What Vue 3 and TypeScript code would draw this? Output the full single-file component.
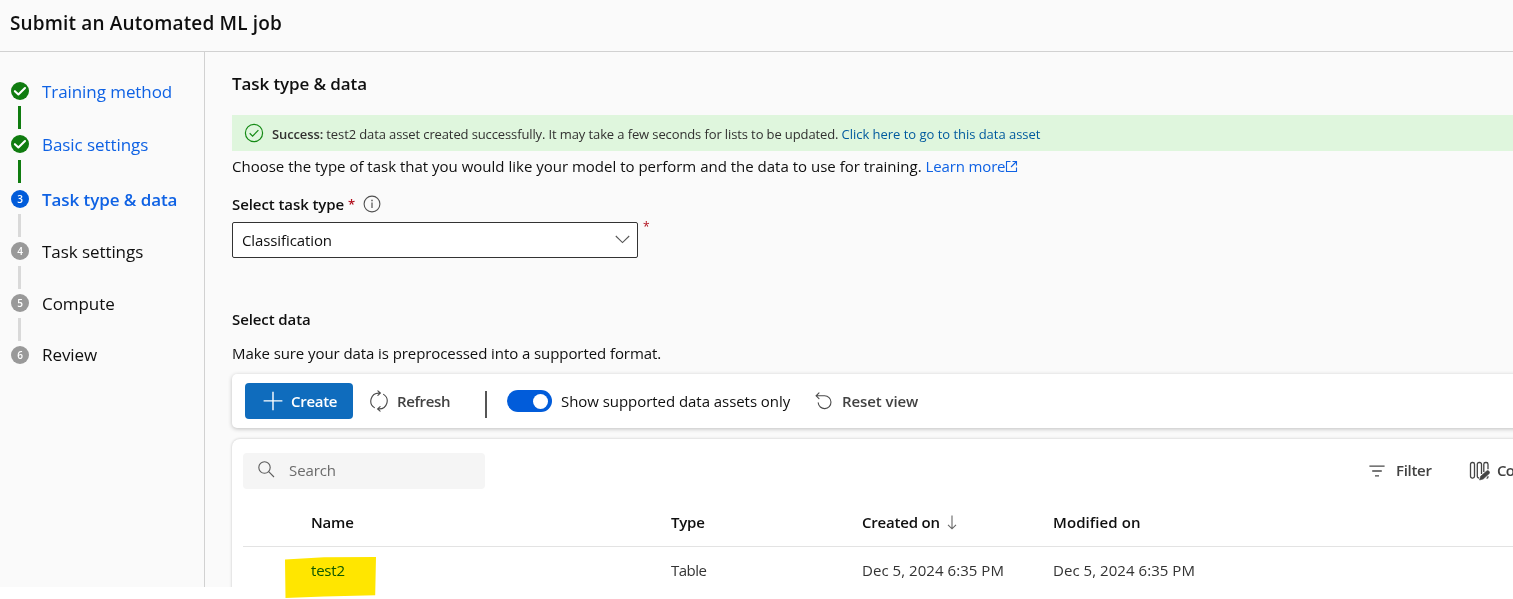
<script setup lang="ts">
type StepState = 'done' | 'current' | 'todo'

interface Step {
  label: string
  state: StepState
  gap: number
}

interface Asset {
  name: string
  type: string
  created: string
  modified: string
}

const steps: Step[] = [
  { label: 'Training method', state: 'done', gap: 35 },
  { label: 'Basic settings', state: 'done', gap: 37 },
  { label: 'Task type & data', state: 'current', gap: 34 },
  { label: 'Task settings', state: 'todo', gap: 34 },
  { label: 'Compute', state: 'todo', gap: 34 },
  { label: 'Review', state: 'todo', gap: 0 },
]

const assets: Asset[] = [
  { name: 'test2', type: 'Table', created: 'Dec 5, 2024 6:35 PM', modified: 'Dec 5, 2024 6:35 PM' },
]
</script>

<template>
  <div class="page">
    <div class="app">
      <header class="top"><h1>Submit an Automated ML job</h1></header>
      <div class="body">
        <nav class="steps">
          <template v-for="(step, i) in steps" :key="step.label">
            <div class="step" :class="step.state">
              <span class="dot">
                <svg v-if="step.state === 'done'" width="18" height="18" viewBox="0 0 18 18">
                  <path d="M3.9 9.2 7.4 12.5 14 6" fill="none" stroke="#fff" stroke-width="2.1" stroke-linecap="round" stroke-linejoin="round" />
                </svg>
                <template v-else>{{ i + 1 }}</template>
              </span>
              <span class="step-label">{{ step.label }}</span>
            </div>
            <div v-if="step.gap" class="link" :class="step.state" :style="{ height: step.gap + 'px' }"><i></i></div>
          </template>
        </nav>

        <main class="main">
          <h2>Task type &amp; data</h2>
          <div class="banner">
            <svg width="20" height="20" viewBox="0 0 20 20" fill="none" stroke="#158a15">
              <circle cx="10" cy="10" r="8.6" stroke-width="1.2" />
              <path d="M5.7 10.3 8.6 13.1 14.4 7.1" stroke-width="1.2" />
            </svg>
            <span class="banner-text"><b>Success:</b> test2 data asset created successfully. It may take a few seconds for lists to be updated. <a>Click here to go to this data asset</a></span>
          </div>
          <p class="desc">
            <span>Choose the type of task that you would like your model to perform and the data to use for training.</span>
            <a>Learn more</a>
            <svg width="13" height="13" viewBox="0 0 13 13" fill="none" stroke="#0f62e4" stroke-width="1.1">
              <path d="M5.500 1.500H1.500v10h10V7.500M7.500 1.500h4v4M11.500 1.500 6 7" />
            </svg>
          </p>
          <div class="field-label">
            <span>Select task type</span><em>*</em>
            <svg width="18" height="18" viewBox="0 0 18 18" fill="none" stroke="#505050">
              <circle cx="9" cy="9" r="7.9" stroke-width="1.1" />
              <path d="M9 7.6v5.4" stroke-width="1.2" /><path d="M9 4.8v1.4" stroke-width="1.4" />
            </svg>
          </div>
          <div class="select-row">
            <div class="select">
              <span>Classification</span>
              <svg width="15" height="9" viewBox="0 0 15 9" fill="none" stroke="#555" stroke-width="1.1"><path d="M.8 1 7.5 7.6 14.2 1" /></svg>
            </div>
            <em>*</em>
          </div>

          <h3>Select data</h3>
          <p class="hint">Make sure your data is preprocessed into a supported format.</p>

          <div class="toolbar">
            <button class="create">
              <svg width="20" height="20" viewBox="0 0 20 20" stroke="#fff" stroke-width="1.4"><path d="M10 .8v18.4M.6 9.9h18.8" /></svg>
              <span>Create</span>
            </button>
            <div class="refresh">
              <svg width="18" height="22" viewBox="0 0 18 22" fill="none" stroke="#4a4a4a" stroke-width="1.1" stroke-linecap="round">
                <path d="M4.4 17.6A7.900 7.900 0 0 1 8.700 3.100h1.700M7.900.9l2.500 2.200-2.500 2.300" />
                <path d="M13.600 4.400a7.900 7.900 0 0 1-4.300 14.500H7.600M10.100 16.600l-2.500 2.300 2.500 2.200" />
              </svg>
              <span>Refresh</span>
            </div>
            <i class="divider"></i>
            <span class="toggle"><i></i></span>
            <span class="toggle-label">Show supported data assets only</span>
            <div class="reset">
              <svg width="18" height="18" viewBox="0 0 18 18" fill="none" stroke="#4a4a4a" stroke-width="1.1" stroke-linecap="round">
                <path d="M4 .9 1.1 3.8 4 6.700M1.200 3.800h8.400a6.400 6.400 0 1 1-6.400 6.900" />
              </svg>
              <span>Reset view</span>
            </div>
          </div>

          <section class="panel">
            <div class="panel-bar">
              <div class="search">
                <svg width="17" height="17" viewBox="0 0 17 17" fill="none" stroke="#5c5c5c" stroke-width="1.1">
                  <circle cx="6.5" cy="6.5" r="5.700" /><path d="m10.700 10.700 5.300 5.300" />
                </svg>
                <span>Search</span>
              </div>
              <div class="filter">
                <svg width="16" height="12" viewBox="0 0 16 12" stroke="#4a4a4a" stroke-width="1.3"><path d="M.4 1.200h15.200M3.200 6h9.600M6 10.800h4" /></svg>
                <span>Filter</span>
              </div>
              <div class="columns">
                <svg width="21" height="20" viewBox="0 0 21 20" fill="none" stroke="#444" stroke-width="1.3">
                  <rect x="1.500" y="1.500" width="4" height="15.600" rx="1.800" />
                  <path d="M12.500 13V3.300a1.800 1.800 0 0 0-1.800-1.800h-.6a1.800 1.800 0 0 0-1.800 1.800v12a1.800 1.800 0 0 0 1.800 1.800" />
                  <path d="M14.800 11V3.300a1.800 1.800 0 0 1 1.800-1.800h.6a1.800 1.800 0 0 1 1.800 1.800v5" />
                  <path d="M10.600 19 11.600 15.300 17.400 10.200a1.800 1.800 0 0 1 2.600 2.600l-5.800 5.200z" fill="#444" stroke-width=".6" />
                  <path d="M17.600 17.300c1 0 1.500-.8 1.500-2" />
                </svg>
                <span>Co</span>
              </div>
            </div>
            <div class="table">
              <div class="tr th">
                <span>Name</span><span>Type</span>
                <span>Created on
                  <svg width="10" height="15" viewBox="0 0 10 15" fill="none" stroke="#666" stroke-width="1.1"><path d="M5 .5v13.200M1 9.800l4 4 4-4" /></svg>
                </span>
                <span>Modified on</span>
              </div>
              <div v-for="asset in assets" :key="asset.name" class="tr td">
                <a>{{ asset.name }}</a><span>{{ asset.type }}</span><span>{{ asset.created }}</span><span>{{ asset.modified }}</span>
              </div>
            </div>
          </section>
        </main>
      </div>
    </div>
    <svg class="marker" width="93" height="43" viewBox="0 0 93 43">
      <path d="M1 3.500 40 1.200 92 1 91.200 39.300 40 40.600 1.500 42Z" fill="#ffe600" />
    </svg>
  </div>
</template>

<style>
html, body { margin: 0; background: #fff; overflow: hidden; }
</style>

<style scoped>
.page {
  position: relative;
  width: 1513px;
  height: 599px;
  overflow: hidden;
  background: #fff;
  color: #0f0f0f;
  font-family: "Open Sans", "Noto Sans", sans-serif;
  font-size: 15px;
  white-space: nowrap;
}
.app { height: 587px; overflow: hidden; background: #fafafa; display: flex; flex-direction: column; }
h1, h2, h3, p { margin: 0; font-weight: 600; }
p { font-weight: 400; }
svg { flex: none; display: block; }
a { color: #0f62e4; }
em { font-style: normal; color: #b10e1c; }
.top { height: 51px; flex: none; border-bottom: 1px solid #d1d1d1; padding-left: 10px; }
h1 { font-size: 19px; line-height: 46px; letter-spacing: .16px; }
.body { display: flex; flex: 1; min-height: 0; }
.steps { width: 193px; flex: none; border-right: 1px solid #d1d1d1; padding: 30px 0 0 11px; }
.step { display: flex; align-items: center; height: 18px; gap: 13px; font-size: 17px; letter-spacing: -.07px; }
.dot {
  width: 18px; height: 18px; border-radius: 50%; background: #999; color: #fff;
  font-size: 10px; font-weight: 600; line-height: 18px; text-align: center; flex: none;
}
.done .dot { background: #107c10; }
.current .dot { background: #015cda; }
.step-label { line-height: 24px; margin-top: 2px; }
.step:last-child .step-label { margin-top: 0; }
.done .step-label, .current .step-label { color: #0f62e4; }
.current .step-label { font-weight: 600; }
.link { width: 17px; display: flex; align-items: center; justify-content: center; }
.link i { width: 3px; height: 23px; background: #d9d9d9; }
.link.done i { background: #107c10; }
.main { flex: 1; min-width: 0; padding-left: 27px; display: flex; flex-direction: column; }
.main > * { flex: none; }
h2 { font-size: 17px; line-height: 24px; margin-top: 20px; letter-spacing: -.1px; }
.banner {
  height: 36px; margin-top: 19px; background: #dff6dd; display: flex; align-items: center;
  padding-left: 12px; gap: 8px; font-size: 13px; color: #323130; letter-spacing: -.117px;
}
.banner b { font-weight: 600; }
.banner a { color: #005a9e; letter-spacing: -.03px; }
.banner-text { margin-top: 2px; }
.desc { display: flex; align-items: center; height: 22px; margin-top: 4px; }
.desc a { margin-left: 4px; letter-spacing: -.15px; }
.field-label { display: flex; align-items: center; height: 22px; margin-top: 16px; font-weight: 600; letter-spacing: -.08px; }
.field-label em { margin-left: 4px; font-size: 13px; }
.field-label svg { margin: -1px 0 0 8px; }
.select-row { display: flex; margin-top: 7px; }
.select-row em { margin-left: 5px; line-height: 10px; font-size: 12px; }
.select {
  width: 406px; height: 36px; box-sizing: border-box; border: 1px solid #333; border-radius: 2px; letter-spacing: -.1px;
  background: #fff; display: flex; align-items: center; justify-content: space-between; padding: 0 7px 0 9px;
}
.select svg { margin-top: -2px; }
h3 { font-size: 15px; line-height: 22px; margin-top: 50px; letter-spacing: -.1px; }
.hint { line-height: 22px; margin-top: 12px; letter-spacing: -.08px; }
.toolbar {
  height: 54px; margin: 10px -10px 0 0; background: #fff; border-radius: 5px; display: flex; align-items: center;
  padding-left: 13px; box-shadow: 0 1px 4px rgba(0, 0, 0, .24);
}
.create {
  width: 108px; height: 36px; border: 0; border-radius: 4px; background: #0f6cbd; color: #fff; padding: 0 0 0 18px;
  display: flex; align-items: center; gap: 8px; font: 600 15px "Open Sans", "Noto Sans", sans-serif; letter-spacing: -.3px;
}
.refresh, .reset { display: flex; align-items: center; gap: 9px; font-weight: 600; color: #424242; }
.refresh { margin-left: 17px; width: 115px; letter-spacing: -.35px; }
.reset { letter-spacing: -.08px; }
.divider { width: 2px; height: 27px; background: #555; margin-top: 6px; }
.toggle { width: 45px; height: 22px; border-radius: 11px; background: #015cda; margin-left: 20px; display: flex; align-items: center; justify-content: flex-end; }
.toggle i { width: 15px; height: 15px; border-radius: 50%; background: #fff; margin-right: 4px; }
.toggle-label { margin-left: 9px; width: 254px; letter-spacing: -.05px; }
.panel { height: 180px; margin: 11px -10px 0 0; background: #fff; border-radius: 8px 8px 0 0; box-shadow: 0 0 3px rgba(0, 0, 0, .22); padding: 14px 0 0 11px; }
.panel-bar { display: flex; align-items: center; height: 36px; color: #424242; font-weight: 600; }
.panel-bar > * { flex: none; }
.panel-bar span { margin-top: -2px; }
.search {
  width: 242px; height: 36px; border-radius: 4px; background: #f5f5f5; box-sizing: border-box; padding-left: 15px;
  display: flex; align-items: center; gap: 14px; font-weight: 400; color: #6b6b6b; letter-spacing: -.1px;
}
.search svg { margin-top: -3px; }
.filter { display: flex; align-items: center; gap: 11px; margin-left: 884px; width: 100px; letter-spacing: -.3px; }
.filter svg { margin-top: -1px; }
.columns { display: flex; align-items: center; gap: 7px; letter-spacing: -.8px; }
.tr { display: grid; grid-template-columns: 360px 191px 191px 1fr; padding-left: 68px; align-items: center; }
.th { height: 58px; font-weight: 600; border-bottom: 1px solid #e3e3e3; box-sizing: border-box; padding-top: 9px; letter-spacing: -.2px; }
.th span { display: flex; align-items: center; gap: 7px; }
.th span:last-child { letter-spacing: .08px; }
.td { height: 46px; color: #333; letter-spacing: .05px; }
.td > :nth-child(2) { letter-spacing: -.5px; }
.td > a { letter-spacing: -.2px; }
.marker { position: absolute; left: 284px; top: 556px; mix-blend-mode: multiply; }
</style>
